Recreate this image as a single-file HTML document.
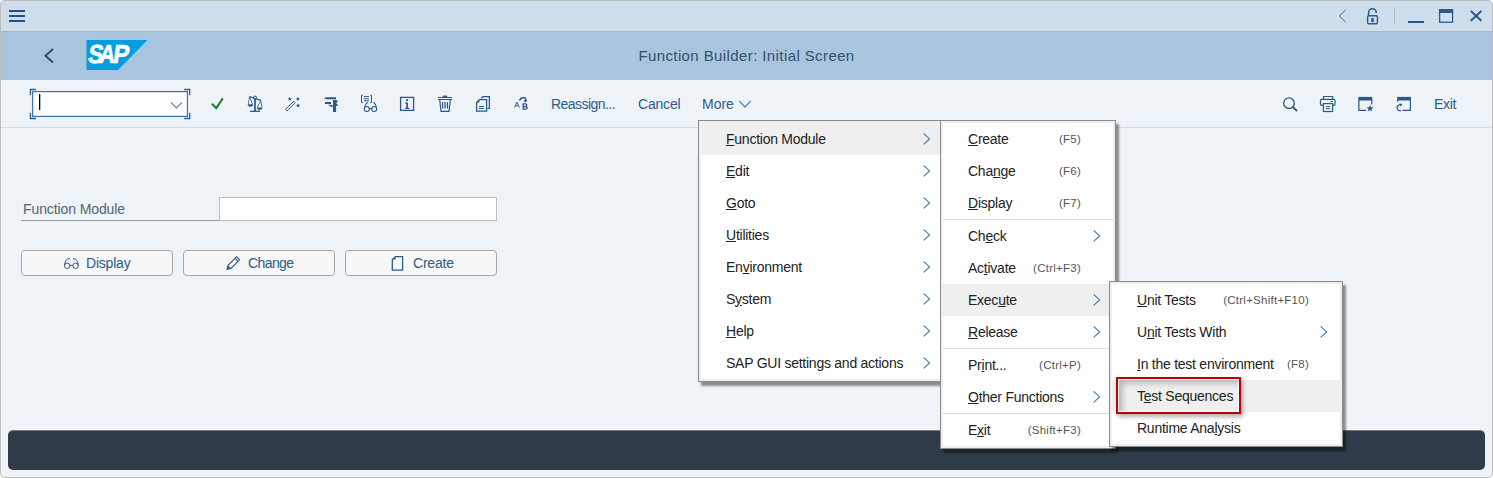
<!DOCTYPE html>
<html><head><meta charset="utf-8">
<style>
*{box-sizing:border-box;margin:0;padding:0}
html,body{width:1493px;height:478px;overflow:hidden;background:#fff;font-family:"Liberation Sans",sans-serif}
.win{position:absolute;left:0;top:0;width:1493px;height:478px;border-radius:5px;background:#eef3f8;overflow:hidden}
.frame{position:absolute;left:0;top:0;width:1493px;height:478px;border:1px solid #bcbcbc;border-radius:5px}
.abs{position:absolute}
svg{position:absolute;overflow:visible}
.titlebar{left:0;top:0;width:1493px;height:32px;background:#cfdeec;border-bottom:1px solid #b3b3b3}
.header{left:0;top:32px;width:1493px;height:48px;background:#a9c5de}
.toolbar{left:0;top:80px;width:1493px;height:48px;background:#eef3f8;border-bottom:1px solid #d0deea}
.status{left:8px;top:430px;width:1477px;height:40px;background:#2f3b48;border-radius:5px;border-top:1px solid #6f7a85}
.title{left:0;top:47px;width:1493px;text-align:center;font-size:15px;letter-spacing:0.4px;color:#32506e;line-height:18px;white-space:nowrap}
.tb{position:absolute;font-size:14px;color:#2f5b87;line-height:16px;top:96px;white-space:nowrap}
.lbl{position:absolute;left:23px;top:201px;font-size:14px;line-height:16px;color:#556472;white-space:nowrap;letter-spacing:-0.1px}
.uline{position:absolute;left:21px;top:220px;width:198px;height:1px;background:#9c9c9c}
.inp{position:absolute;left:219px;top:197px;width:278px;height:24px;background:#fff;border:1px solid #bcbcbc}
.btn{position:absolute;top:250px;width:152px;height:26px;background:#f7f7f7;border:1px solid #a6a6a6;border-radius:4px}
.btn span{position:absolute;top:4px;font-size:14px;line-height:16px;color:#2f5b87;white-space:nowrap}
.menu{position:absolute;border:1px solid #8a8a8a;background:#efefef;box-shadow:3px 4px 2px rgba(0,0,0,.42)}
.mi{position:absolute;left:2px;right:2px;height:32px;background:#fff;font-size:14px;color:#222;letter-spacing:-0.25px}
.mi.hl{background:#efefef}
.mi .t{position:absolute;left:25px;top:8px;line-height:16px;white-space:nowrap}
.mi .k{position:absolute;right:32px;top:9px;font-size:11.5px;color:#555;line-height:14px;letter-spacing:0.25px;white-space:nowrap}
.m3 .mi .k{right:31px}
.sep{position:absolute;left:2px;right:2px;height:1px;background:#dcdcdc}
u{text-decoration:underline;text-decoration-thickness:1px;text-underline-offset:1px}
.redbox{position:absolute;left:1116px;top:377px;width:125px;height:37px;border:2px solid #bb0000;box-shadow:2px 3px 4px rgba(0,0,0,.3), inset 0 0 0 1px rgba(255,255,255,.8), inset 5px 5px 6px -1px rgba(0,0,0,.25)}
.chev{position:absolute;right:12px;top:10px;width:8px;height:12px}
</style></head><body>
<div class="win">
  <div class="abs titlebar"></div>
  <div class="abs header"></div>
  <div class="abs toolbar"></div>
  <div class="abs status"></div>
</div>
<div class="frame"></div>
<div class="abs title">Function Builder: Initial Screen</div>
<svg width="1493" height="478" style="left:0;top:0" viewBox="0 0 1493 478">
 <g fill="#27527f">
  <rect x="9" y="10" width="16" height="2"/><rect x="9" y="15" width="16" height="2"/><rect x="9" y="20" width="16" height="2"/>
 </g>
 <polyline points="53,49 45.5,55.7 53,62.4" fill="none" stroke="#2c4d70" stroke-width="2"/>
 <polygon points="86.5,40 147.5,40 118,70 86.5,70" fill="#009de0"/>
 <g fill="none" stroke="#2a5a8a">
  <polyline points="1345.6,10 1339.2,16 1345.6,22" stroke-width="1" stroke="#3469a0"/>
  <path d="M1368.6,15.5 V12.5 A3.8,3.8 0 0 1 1376.2,12.5 V13" stroke-width="1.5"/>
  <rect x="1367.6" y="15.8" width="9.8" height="7.9" rx="1.2" stroke-width="1.4"/>
  <line x1="1470.8" y1="11" x2="1481.4" y2="20.8" stroke-width="2"/>
  <line x1="1481.4" y1="11" x2="1470.8" y2="20.8" stroke-width="2"/>
  <rect x="1439.6" y="10" width="13" height="12.2" stroke-width="1.3"/>
 </g>
 <g fill="#2a5a8a">
  <circle cx="1372.5" cy="19" r="1.3"/><polygon points="1371.5,19.5 1373.5,19.5 1374,22 1371,22"/>
  <rect x="1439" y="9" width="14" height="4"/>
  <rect x="1408" y="21" width="16" height="2" fill="#2c5680"/>
 </g>
 <rect x="1394" y="8" width="1" height="16" fill="#b3bcc4"/>
</svg>
<svg width="1493" height="478" style="left:0;top:0"><g font-family="Liberation Sans" font-weight="bold" font-size="26" fill="#fff" stroke="#fff" stroke-width="0.7" transform="translate(0,62.8) skewX(-8) translate(0,-62.8)"><text x="87.2" y="62.8" textLength="15" lengthAdjust="spacingAndGlyphs">S</text><text x="98.5" y="62.8" textLength="15.5" lengthAdjust="spacingAndGlyphs">A</text><text x="112.3" y="62.8" textLength="16" lengthAdjust="spacingAndGlyphs">P</text></g></svg>

<svg width="1493" height="478" style="left:0;top:0">
 <g fill="none" stroke="#2e5b88" stroke-width="1.5">
  <path d="M30.4,95.2 V89.5 H36 M184.2,89.5 H189.7 V95.2 M30.4,112.8 V118.5 H36 M184.2,118.5 H189.7 V112.8" stroke-width="1.3"/>
 </g>
 <rect x="32.6" y="91.6" width="154.8" height="24.8" fill="#fff" stroke="#3f74aa" stroke-width="1.25"/>
 <rect x="39" y="94" width="1.3" height="16" fill="#000"/>
 <polyline points="170.8,102.3 176.4,107.9 182,102.3" fill="none" stroke="#4a86c0" stroke-width="1.1"/>
 <polyline points="211.9,103.7 216.3,108.1 222.8,98.4" fill="none" stroke="#1f7a31" stroke-width="2"/>
 <g fill="none" stroke="#2d5887" stroke-width="1.2">
  <!-- scales -->
  <circle cx="255" cy="97.7" r="1.6" stroke-width="1"/>
  <line x1="255" y1="99" x2="255" y2="111" stroke-width="1.7"/>
  <line x1="250" y1="111.3" x2="260" y2="111.3" stroke-width="1.3"/>
  <line x1="249.5" y1="96.6" x2="260.8" y2="100.4"/>
  <path d="M249.5,96.6 L248.3,104.6 M249.5,96.6 L252.7,104.6 M260.8,100.4 L257.3,107.6 M260.8,100.4 L262,107.6" stroke-width="0.8"/>
  <!-- trash -->
  <path d="M437.9,97.5 H452 M438,99.5 H452 M439.7,99.5 L441,111.3 H449 L450.3,99.5 M442.6,102 V108.5 M445,102 V108.5 M447.4,102 V108.5" stroke-width="1.2"/>
  <!-- info -->
  <rect x="400.6" y="97.4" width="13" height="13" stroke-width="1.3"/>
  <!-- copy -->
  <path d="M481.3,98.4 L482.9,96.7 H489.4 V108.4 H487.4" stroke-width="1.3"/>
  <path d="M476.6,102.4 L479.4,99.6 H486.6 V111.2 H476.6 Z" stroke-width="1.3"/>
  <path d="M479,106.5 H484 M479,108.5 H484" stroke-width="1"/>
  <!-- icon5 brackets -->
  <path d="M362.8,95.3 H361.5 V102.5 H362.8 M370.2,95.3 H371.5 V102.5 H370.2" stroke-width="1"/>
  <path d="M363.8,96.6 H369 M363.8,98.8 H369 M363.8,100.8 H369" stroke-width="1"/>
  <circle cx="366.8" cy="109" r="2.5" stroke-width="1.1"/>
  <circle cx="374.2" cy="109" r="2.5" stroke-width="1.1"/>
  <path d="M369.2,108.6 H371.8 M364.4,108 Q365,104 367.6,102.2 M376.6,108 Q376,104 373.4,102.2" stroke-width="1.1"/>
  <!-- search -->
  <circle cx="1289" cy="103.2" r="5.3" stroke-width="1.3"/>
  <line x1="1292.8" y1="107" x2="1297" y2="111" stroke-width="1.8"/>
  <!-- printer -->
  <path d="M1323.5,99.5 V96.5 H1332.6 V99.5" stroke-width="1.2"/>
  <path d="M1323.2,105.3 H1321.5 Q1320.5,105.3 1320.5,104.3 V100.3 Q1320.5,99.3 1321.5,99.3 H1334 Q1335,99.3 1335,100.3 V104.3 Q1335,105.3 1334,105.3 H1332.8" stroke-width="1.2"/>
  <rect x="1323.4" y="103.6" width="9.2" height="7.9" stroke-width="1.2"/>
  <path d="M1326,106.6 H1330.2 M1326,108.6 H1330.2 M1330.6,101.6 H1333" stroke-width="1"/>
  <!-- window star -->
  <path d="M1358.9,100 V110.4 H1366 M1371.8,100 V104.5" stroke-width="1.2"/>
  <!-- window arrow -->
  <path d="M1397.8,100 V101.8 M1410.4,100 V110.4 H1402.5" stroke-width="1.2"/>
  <path d="M1401,110.6 A3,3 0 1 1 1400.6,104.8" stroke-width="1.2"/>
 </g>
 <g fill="#2d5887">
  <path d="M247.8,104.3 H253.2 A2.7,2.4 0 0 1 247.8,104.3 Z M256.9,107.5 H262.3 A2.7,2.4 0 0 1 256.9,107.5 Z"/>
  <rect x="442.8" y="95.6" width="4.4" height="1.6"/>
  <path d="M476.6,102.4 L479.4,99.6 V102.4 Z"/>
  <path d="M323.9,98.2 L326,97.3 H336 V99.3 H326 Z M325,102 H331 V104 H325 Z M327.5,104.8 L332.5,105 V107.5 Z M333,100.1 H336.1 V111.9 H333 Z M336,100.1 L338.2,101 L336.2,103 L338.2,105.5 L336,106 Z"/>
  <!-- wand stars -->
  <polygon points="289.80,96.80 290.39,98.19 291.89,98.32 290.75,99.31 291.09,100.78 289.80,100.00 288.51,100.78 288.85,99.31 287.71,98.32 289.21,98.19"/><polygon points="297.90,96.80 298.49,98.19 299.99,98.32 298.85,99.31 299.19,100.78 297.90,100.00 296.61,100.78 296.95,99.31 295.81,98.32 297.31,98.19"/><polygon points="298.10,103.40 298.69,104.79 300.19,104.92 299.05,105.91 299.39,107.38 298.10,106.60 296.81,107.38 297.15,105.91 296.01,104.92 297.51,104.79"/>
  <!-- info i -->
  <circle cx="407" cy="100.2" r="1.1"/>
  <path d="M405.2,102.6 H408 V107.7 H409.2 V109 H405.2 V107.7 H406.3 V103.8 H405.2 Z"/>
  <!-- window tops -->
  <rect x="1358.3" y="96.9" width="14" height="3.6"/>
  <rect x="1397.2" y="96.9" width="13.8" height="3.6"/>
  <path d="M1370,104.8 L1370.9,107.3 L1373.5,107.4 L1371.5,109 L1372.2,111.5 L1370,110 L1367.8,111.5 L1368.5,109 L1366.5,107.4 L1369.1,107.3 Z"/>
  <path d="M1399.5,103.5 L1402.5,104 L1400.5,106.8 Z"/>
  <!-- AB arrow head -->
  <path d="M523.5,100.2 L527.5,100.2 L525.4,102.8 Z"/>
 </g>
 <g fill="none" stroke="#2d5887">
  <path d="M286.2,110.2 L285.6,109.2 L293.8,101.2 L295.2,102.6 L287.2,110.8 Z" stroke-width="1"/>
  <path d="M519.5,100.5 Q521,96.8 525.3,98 Q526,98.5 525.5,101" stroke-width="1.5"/>
  <path d="M514.5,107.7 L516.9,102 L519.4,107.7 M515.3,105.8 H518.6" stroke-width="0.9"/>
 </g>
 <path d="M523.1,103.9 H525.3 Q526.8,103.9 526.8,105.3 Q526.8,106.5 525.3,106.6 Q527.2,106.7 527.2,108.1 Q527.2,109.2 525.6,109.2 H523.1 Z M523.1,106.6 H525.3" fill="none" stroke="#2d5887" stroke-width="1.3"/>
</svg>
<span class="tb" style="left:551px;letter-spacing:-0.55px">Reassign...</span>
<span class="tb" style="left:638px;letter-spacing:-0.2px">Cancel</span>
<span class="tb" style="left:702px">More</span>
<svg width="1493" height="478" style="left:0;top:0"><polyline points="739.3,101.2 745,106.9 750.7,101.2" fill="none" stroke="#3570aa" stroke-width="1.1"/></svg>
<span class="tb" style="left:1434px;letter-spacing:-0.3px">Exit</span>

<span class="lbl">Function Module</span>
<div class="uline"></div>
<div class="inp"></div>
<div class="btn" style="left:21px"><span style="left:64px;letter-spacing:-0.2px">Display</span></div>
<div class="btn" style="left:183px"><span style="left:64px;letter-spacing:-0.6px">Change</span></div>
<div class="btn" style="left:345px"><span style="left:67px;letter-spacing:-0.2px">Create</span></div>
<svg width="1493" height="478" style="left:0;top:0">
 <g fill="none" stroke="#2f5b87" stroke-width="1.2">
  <circle cx="67.2" cy="265.8" r="2.7" stroke-width="1"/>
  <circle cx="75.6" cy="265.8" r="2.7" stroke-width="1"/>
  <path d="M69.9,265.3 H72.9 M64.5,265.5 Q65,260 68,258.8 H69.8 M78.3,265.5 Q77.8,260 74.8,258.8 H73" stroke-width="1"/>
  <path d="M227,269.3 L228,265.3 L236.6,256.8 L239.6,259.8 L231,268.4 Z M235,258.4 L238,261.4" stroke-width="1.1"/>
  <path d="M392.3,259.5 L395.5,256.6 H402.6 V270.2 H392.3 Z" stroke-width="1.3"/>
 </g>
 <g fill="#2f5b87">
  <path d="M227,269.3 L228,265.3 L231,268.4 Z"/>
  <path d="M392.3,259.5 L395.5,256.6 V259.5 Z"/>
 </g>
</svg>

<!--MENUS-->
<div class="menu" style="left:698px;top:120px;width:248px;height:262px"><div class="mi hl" style="top:2px"><span class="t"><u>F</u>unction Module</span><svg class="chev" width="8" height="12" viewBox="0 0 8 12"><polyline points="0.6,0.4 6.6,5.9 0.6,11.4" fill="none" stroke="#3a78b5" stroke-width="1.1"/></svg></div><div class="mi" style="top:34px"><span class="t"><u>E</u>dit</span><svg class="chev" width="8" height="12" viewBox="0 0 8 12"><polyline points="0.6,0.4 6.6,5.9 0.6,11.4" fill="none" stroke="#3a78b5" stroke-width="1.1"/></svg></div><div class="mi" style="top:66px"><span class="t"><u>G</u>oto</span><svg class="chev" width="8" height="12" viewBox="0 0 8 12"><polyline points="0.6,0.4 6.6,5.9 0.6,11.4" fill="none" stroke="#3a78b5" stroke-width="1.1"/></svg></div><div class="mi" style="top:98px"><span class="t"><u>U</u>tilities</span><svg class="chev" width="8" height="12" viewBox="0 0 8 12"><polyline points="0.6,0.4 6.6,5.9 0.6,11.4" fill="none" stroke="#3a78b5" stroke-width="1.1"/></svg></div><div class="mi" style="top:130px"><span class="t">En<u>v</u>ironment</span><svg class="chev" width="8" height="12" viewBox="0 0 8 12"><polyline points="0.6,0.4 6.6,5.9 0.6,11.4" fill="none" stroke="#3a78b5" stroke-width="1.1"/></svg></div><div class="mi" style="top:162px"><span class="t">S<u>y</u>stem</span><svg class="chev" width="8" height="12" viewBox="0 0 8 12"><polyline points="0.6,0.4 6.6,5.9 0.6,11.4" fill="none" stroke="#3a78b5" stroke-width="1.1"/></svg></div><div class="mi" style="top:194px"><span class="t"><u>H</u>elp</span><svg class="chev" width="8" height="12" viewBox="0 0 8 12"><polyline points="0.6,0.4 6.6,5.9 0.6,11.4" fill="none" stroke="#3a78b5" stroke-width="1.1"/></svg></div><div class="mi" style="top:226px"><span class="t">SAP GUI settings and actions</span><svg class="chev" width="8" height="12" viewBox="0 0 8 12"><polyline points="0.6,0.4 6.6,5.9 0.6,11.4" fill="none" stroke="#3a78b5" stroke-width="1.1"/></svg></div></div>
<div class="menu" style="left:940px;top:120px;width:176px;height:329px"><div class="mi" style="top:2px"><span class="t"><u>C</u>reate</span><span class="k">(F5)</span></div><div class="mi" style="top:34px"><span class="t">Cha<u>n</u>ge</span><span class="k">(F6)</span></div><div class="mi" style="top:66px"><span class="t"><u>D</u>isplay</span><span class="k">(F7)</span></div><div class="mi" style="top:99px"><span class="t">Ch<u>e</u>ck</span><svg class="chev" width="8" height="12" viewBox="0 0 8 12"><polyline points="0.6,0.4 6.6,5.9 0.6,11.4" fill="none" stroke="#3a78b5" stroke-width="1.1"/></svg></div><div class="mi" style="top:131px"><span class="t">Ac<u>t</u>ivate</span><span class="k">(Ctrl+F3)</span></div><div class="mi hl" style="top:163px"><span class="t">Exec<u>u</u>te</span><svg class="chev" width="8" height="12" viewBox="0 0 8 12"><polyline points="0.6,0.4 6.6,5.9 0.6,11.4" fill="none" stroke="#3a78b5" stroke-width="1.1"/></svg></div><div class="mi" style="top:195px"><span class="t"><u>R</u>elease</span><svg class="chev" width="8" height="12" viewBox="0 0 8 12"><polyline points="0.6,0.4 6.6,5.9 0.6,11.4" fill="none" stroke="#3a78b5" stroke-width="1.1"/></svg></div><div class="mi" style="top:228px"><span class="t">Pr<u>i</u>nt...</span><span class="k">(Ctrl+P)</span></div><div class="mi" style="top:260px"><span class="t"><u>O</u>ther Functions</span><svg class="chev" width="8" height="12" viewBox="0 0 8 12"><polyline points="0.6,0.4 6.6,5.9 0.6,11.4" fill="none" stroke="#3a78b5" stroke-width="1.1"/></svg></div><div class="mi" style="top:293px"><span class="t">E<u>x</u>it</span><span class="k">(Shift+F3)</span></div><div class="sep" style="top:98px"></div><div class="sep" style="top:227px"></div><div class="sep" style="top:292px"></div></div>
<div class="menu m3" style="left:1109px;top:281px;width:234px;height:166px"><div class="mi" style="top:2px"><span class="t"><u>U</u>nit Tests</span><span class="k">(Ctrl+Shift+F10)</span></div><div class="mi" style="top:34px"><span class="t">U<u>n</u>it Tests With</span><svg class="chev" width="8" height="12" viewBox="0 0 8 12"><polyline points="0.6,0.4 6.6,5.9 0.6,11.4" fill="none" stroke="#3a78b5" stroke-width="1.1"/></svg></div><div class="mi" style="top:66px"><span class="t"><u>I</u>n the test environment</span><span class="k">(F8)</span></div><div class="mi hl" style="top:98px"><span class="t">T<u>e</u>st Sequences</span></div><div class="mi" style="top:130px"><span class="t">Runtime Ana<u>l</u>ysis</span></div></div>
<div class="redbox"></div>
<!--/MENUS-->
</body></html>
